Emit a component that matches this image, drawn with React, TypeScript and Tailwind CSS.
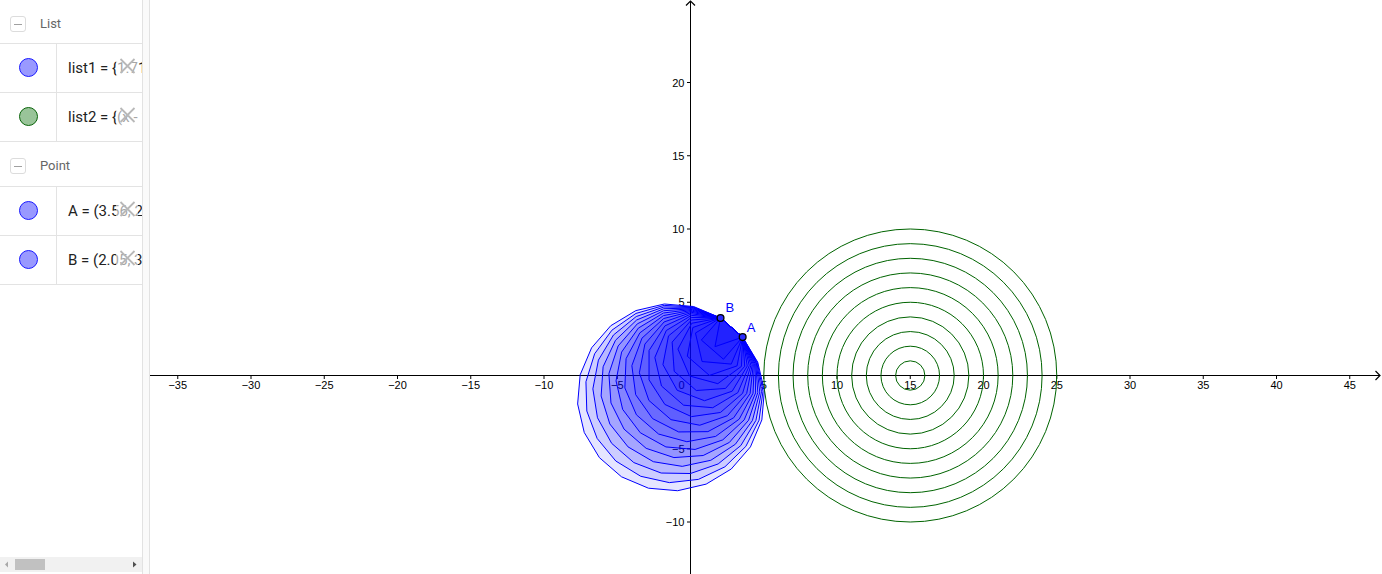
import React from "react";

// graphics view scale (px per unit) and origin inside the svg
const S = 14.65;
const OX = 540.5;
const OY = 375.5;

const A = { x: 3.56, y: 2.62 };
const B = { x: 2.05, y: 3.93 };

const sx = (x: number) => OX + x * S;
const sy = (y: number) => OY - y * S;

// Polygon(A, B, n): regular n-gon counter-clockwise, first side AB
function regularPolygon(n: number) {
  const pts: string[] = [];
  let px = A.x;
  let py = A.y;
  const dx = B.x - A.x;
  const dy = B.y - A.y;
  for (let k = 0; k < n; k++) {
    pts.push(`${sx(px).toFixed(2)},${sy(py).toFixed(2)}`);
    const a = (2 * Math.PI * k) / n;
    px += dx * Math.cos(a) - dy * Math.sin(a);
    py += dx * Math.sin(a) + dy * Math.cos(a);
  }
  return pts.join(" ");
}

const polygons = Array.from({ length: 18 }, (_, i) => regularPolygon(i + 3));
const radii = Array.from({ length: 10 }, (_, i) => i + 1);
const xTicks = Array.from({ length: 17 }, (_, i) => -35 + i * 5).filter((v) => v !== 0);
const yTicks = [20, 15, 10, 5, -5, -10];

const fmt = (v: number) => (v < 0 ? `\u2212${-v}` : `${v}`);

function GroupHeader({ label, tall }: { label: string; tall?: boolean }) {
  return (
    <div
      className={
        tall
          ? "flex h-[45px] items-center border-b border-[#e3e3e3] pl-[10px] pt-[4px]"
          : "flex h-[44px] items-center border-b border-[#e3e3e3] pl-[10px] pt-[5px]"
      }
    >
      <div className="flex h-4 w-4 items-center justify-center rounded-[3px] border border-[#dcdcdc]">
        <div className="h-px w-[8px] bg-[#a0a0a0]" />
      </div>
      <span className="ml-[14px] text-[13px] text-[#666]">{label}</span>
    </div>
  );
}

function ItemRow({ text, green }: { text: string; green?: boolean }) {
  return (
    <div className="relative flex h-[49px] border-b border-[#e3e3e3]">
      <div className="flex w-[57px] shrink-0 items-center justify-center border-r border-[#e3e3e3]">
        <div
          className={
            green
              ? "mb-px h-[19px] w-[19px] rounded-full border border-[#0a640a] bg-[#99c499]"
              : "mb-px h-[19px] w-[19px] rounded-full border border-[#1a1aff] bg-[#9999ff]"
          }
        />
      </div>
      <div className="flex items-center overflow-hidden whitespace-nowrap pl-[11px] text-[15px] text-[#222]">
        {text}
      </div>
      {/* delete button overlay */}
      <div className="absolute left-[116px] top-[10px] flex h-[24px] w-[22px] items-center justify-center bg-white/60">
        <svg width="17" height="16" viewBox="0 0 17 16">
          <path d="M1.5 1 L15.5 15 M15.5 1 L1.5 15" stroke="#b8b8b8" strokeWidth="1.8" fill="none" />
        </svg>
      </div>
    </div>
  );
}

function AlgebraPanel() {
  return (
    <div className="flex h-full w-[142px] shrink-0 flex-col overflow-hidden bg-white" style={{ fontFamily: "Roboto, sans-serif" }}>
      <GroupHeader label="List" />
      <ItemRow text="list1 = {1.71, 2.11}" />
      <ItemRow text="list2 = {(x - 15)²}" green />
      <GroupHeader label="Point" tall />
      <ItemRow text="A = (3.56, 2.62)" />
      <ItemRow text="B = (2.05, 3.93)" />
      <div className="flex-1" />
      <div className="mb-[2px] flex h-[15px] items-center bg-[#f1f1f1]">
        <svg width="15" height="15" viewBox="0 0 15 15" className="shrink-0">
          <path d="M5 7.5 L8 4.5 L8 10.5 Z" fill="#a8a8a8" />
        </svg>
        <div className="h-[11px] w-[30px] bg-[#c1c1c1]" />
        <div className="flex-1" />
        <svg width="12" height="15" viewBox="0 0 12 15" className="shrink-0">
          <path d="M3 4.5 L6.5 7.5 L3 10.5 Z" fill="#505050" />
        </svg>
      </div>
    </div>
  );
}

function Graphics() {
  return (
    <div className="relative h-full flex-1 overflow-hidden bg-white">
      <svg width="1232" height="574" className="block" style={{ fontFamily: "'Liberation Sans', Arial, sans-serif" }}>
        {/* axes */}
        <line x1="0" y1={OY} x2="1230" y2={OY} stroke="#000" strokeWidth="1" />
        <path d={`M1225.5 ${OY - 4.5} L1230 ${OY} L1225.5 ${OY + 4.5}`} stroke="#000" fill="none" strokeWidth="1.2" />
        <line x1={OX} y1="574" x2={OX} y2="1" stroke="#000" strokeWidth="1" />
        <path d={`M${OX - 4.5} 5.5 L${OX} 1 L${OX + 4.5} 5.5`} stroke="#000" fill="none" strokeWidth="1.2" />

        {xTicks.map((v) => (
          <g key={`x${v}`}>
            <line x1={sx(v)} y1={OY} x2={sx(v)} y2={OY + 3.5} stroke="#000" strokeWidth="1" />
            <text x={sx(v)} y={OY + 13.5} textAnchor="middle" fontSize="11" fill="#000">
              {fmt(v)}
            </text>
          </g>
        ))}
        {yTicks.map((v) => (
          <g key={`y${v}`}>
            <line x1={OX - 3.5} y1={sy(v)} x2={OX} y2={sy(v)} stroke="#000" strokeWidth="1" />
            <text x={OX - 6} y={sy(v) + 4} textAnchor="end" fontSize="11" fill="#000">
              {fmt(v)}
            </text>
          </g>
        ))}
        <text x={OX - 6} y={OY + 13.5} textAnchor="end" fontSize="11" fill="#000">
          0
        </text>

        {/* list1 */}
        {polygons.map((p, i) => (
          <polygon key={i} points={p} fill="#0000ff" fillOpacity="0.1" stroke="#0000ff" strokeWidth="1" strokeLinejoin="round" />
        ))}

        {/* list2 */}
        {radii.map((r) => (
          <circle key={r} cx={sx(15)} cy={sy(0)} r={r * S} fill="none" stroke="#006400" strokeWidth="1" />
        ))}

        {/* points */}
        <circle cx={sx(A.x)} cy={sy(A.y)} r="3.4" fill="#2a2aff" stroke="#000" strokeWidth="1.3" />
        <circle cx={sx(B.x)} cy={sy(B.y)} r="3.4" fill="#2a2aff" stroke="#000" strokeWidth="1.3" />
        <text x={sx(A.x) + 4} y={sy(A.y) - 5.5} fontSize="13" fill="#0000ff">
          A
        </text>
        <text x={sx(B.x) + 5} y={sy(B.y) - 5.5} fontSize="13" fill="#0000ff">
          B
        </text>
      </svg>
    </div>
  );
}

export default function App() {
  return (
    <div className="flex h-[574px] w-[1382px] overflow-hidden bg-white">
      <AlgebraPanel />
      <div className="h-full w-[8px] shrink-0 border-l border-r border-[#e2e2e2] bg-[#fafafa]" />
      <Graphics />
    </div>
  );
}
